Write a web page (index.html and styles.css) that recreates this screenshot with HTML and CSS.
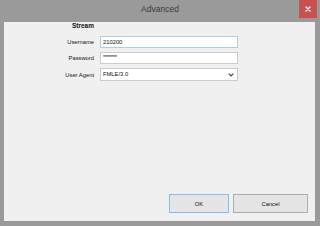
FILE: index.html
```html
<!DOCTYPE html>
<html>
<head>
<meta charset="utf-8">
<link rel="stylesheet" href="styles.css">
</head>
<body>
<div class="window">
  <div class="titlebar">
    <div class="title">Advanced</div>
    <div class="close"><svg width="6" height="6" viewBox="0 0 6 6"><path d="M1 1L5 5M5 1L1 5" stroke="#fff" stroke-width="1.3" stroke-linecap="round"/></svg></div>
  </div>
  <div class="client">
    <div class="form">
      <div class="label heading">Stream</div>
      <div></div>
      <div class="label">Username</div>
      <div class="field focused">210200</div>
      <div class="label">Password</div>
      <div class="field pw">*******</div>
      <div class="label">User Agent</div>
      <div class="field select"><span>FMLE/3.0</span><svg width="6" height="4" viewBox="0 0 6 4"><path d="M0.7 0.7L3 3L5.3 0.7" fill="none" stroke="#444" stroke-width="1.2"/></svg></div>
    </div>
    <div class="buttons">
      <div class="btn default">OK</div>
      <div class="btn cancel">Cancel</div>
    </div>
  </div>
</div>
</body>
</html>
```
FILE: styles.css
```css
html, body {
  margin: 0;
  padding: 0;
}
body {
  width: 320px;
  height: 226px;
  overflow: hidden;
  font-family: "Liberation Sans", Arial, sans-serif;
}
.window {
  width: 320px;
  height: 226px;
  background: #9a9a9a;
  display: flex;
  flex-direction: column;
}
.titlebar {
  height: 22px;
  display: grid;
  grid-template-columns: 1fr auto 1fr;
  align-items: start;
}
.title {
  grid-column: 2;
  line-height: 18px;
  font-size: 8.5px;
  color: #3a3a3a;
}
.close {
  grid-column: 3;
  justify-self: end;
  margin-right: 3px;
  width: 18px;
  height: 18px;
  background: #c75050;
  display: flex;
  align-items: center;
  justify-content: center;
}
.client {
  margin: 0 5px 5px 4px;
  flex: 1;
  background: #f0f0f0;
  display: flex;
  flex-direction: column;
}
.form {
  display: grid;
  grid-template-columns: 90px 138px;
  column-gap: 6px;
  row-gap: 4px;
  align-items: center;
  font-size: 5.8px;
  color: #111;
}
.label {
  text-align: right;
}
.heading {
  font-weight: bold;
  font-size: 6.5px;
  height: 7px;
  line-height: 7px;
  margin-bottom: 3px;
}
.field {
  height: 12px;
  box-sizing: border-box;
  border: 1px solid #cccccc;
  background: #fff;
  padding-left: 2px;
  line-height: 10px;
}
.field.focused {
  border-color: #a9cff0;
}
.field.pw {
  line-height: 9px;
  letter-spacing: -0.3px;
}
.field.select {
  height: 13px;
  line-height: 11px;
  display: flex;
  align-items: center;
  justify-content: space-between;
  padding-right: 3px;
}
.buttons {
  margin-top: auto;
  display: flex;
  justify-content: flex-end;
  gap: 4px;
  padding: 0 7px 8px 0;
}
.btn {
  height: 19px;
  box-sizing: border-box;
  border: 1px solid #adadad;
  background: #e5e5e5;
  font-size: 5.8px;
  display: flex;
  align-items: center;
  justify-content: center;
  color: #111;
}
.btn.default {
  width: 60px;
  border-color: #86bbee;
}
.btn.cancel {
  width: 75px;
}
```
